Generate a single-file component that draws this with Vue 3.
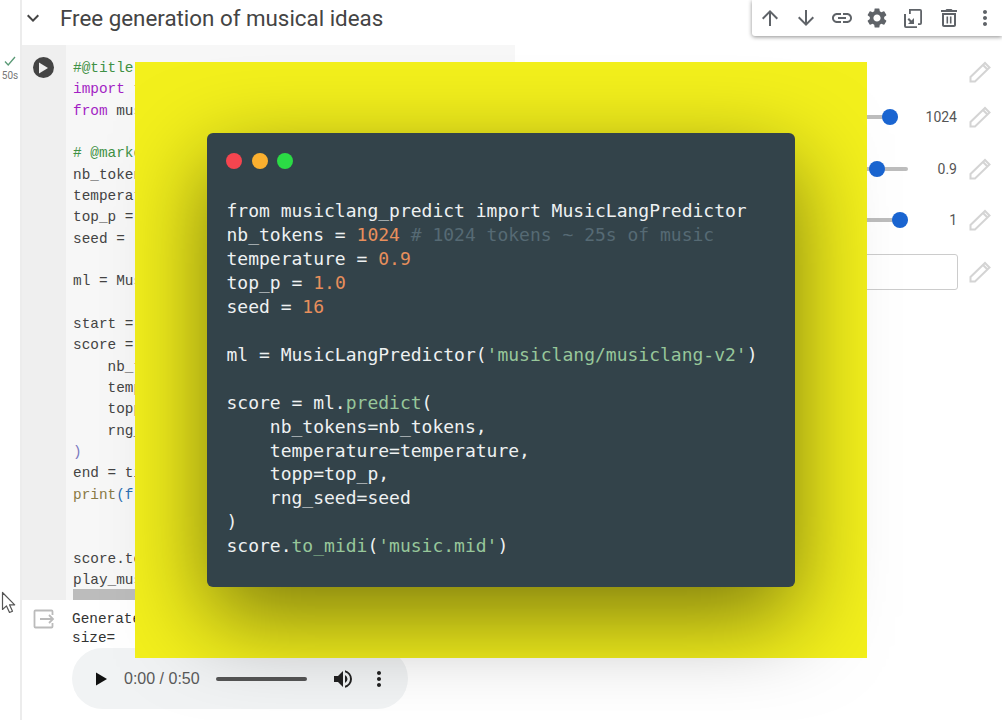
<script setup>
const sliders = [
  { value: '1024', pct: 100 },
  { value: '0.9', pct: 83 },
  { value: '1', pct: 100 }
]
const thumbLeft = (pct) => ({ left: (pct * 134) / 100 + 'px' })
</script>

<template>
  <div class="page">
    <svg class="cursor" width="16" height="24" viewBox="0 0 16 24">
      <path d="M1.5 1.5v17l4-3.6 3 6.6 3-1.3-3-6.4h5.2z" fill="#fff" stroke="#555" stroke-width="1.2" stroke-linejoin="round" />
    </svg>

    <div class="gutter"></div>

    <main class="notebook">
      <header class="head">
        <svg class="chevron" width="24" height="24" viewBox="0 0 24 24"><path d="M16.59 8.59 12 13.17 7.41 8.59 6 10l6 6 6-6z" fill="#444" /></svg>
        <h1 class="title">Free generation of musical ideas</h1>
        <div class="toolbar">
          <svg class="tool" viewBox="0 0 24 24"><path d="M4 12l1.41 1.41L11 7.83V20h2V7.83l5.58 5.59L20 12l-8-8-8 8z" /></svg>
          <svg class="tool" viewBox="0 0 24 24"><path d="M20 12l-1.41-1.41L13 16.17V4h-2v12.17l-5.58-5.59L4 12l8 8 8-8z" /></svg>
          <svg class="tool" viewBox="0 0 24 24"><path d="M3.9 12c0-1.71 1.39-3.1 3.1-3.1h4V7H7c-2.76 0-5 2.24-5 5s2.24 5 5 5h4v-1.9H7c-1.71 0-3.1-1.39-3.1-3.1zM8 13h8v-2H8v2zm9-6h-4v1.9h4c1.71 0 3.1 1.39 3.1 3.1s-1.39 3.1-3.1 3.1h-4V17h4c2.76 0 5-2.24 5-5s-2.24-5-5-5z" /></svg>
          <svg class="tool" viewBox="0 0 24 24"><path d="M19.14 12.94c.04-.3.06-.61.06-.94 0-.32-.02-.64-.07-.94l2.03-1.58a.49.49 0 0 0 .12-.61l-1.92-3.32a.488.488 0 0 0-.59-.22l-2.39.96c-.5-.38-1.03-.7-1.62-.94l-.36-2.54a.484.484 0 0 0-.48-.41h-3.84c-.24 0-.43.17-.47.41l-.36 2.54c-.59.24-1.13.57-1.62.94l-2.39-.96c-.22-.08-.47 0-.59.22L2.74 8.87c-.12.21-.08.47.12.61l2.03 1.58c-.05.3-.09.63-.09.94s.02.64.07.94l-2.03 1.58a.49.49 0 0 0-.12.61l1.92 3.32c.12.22.37.29.59.22l2.39-.96c.5.38 1.03.7 1.62.94l.36 2.54c.05.24.24.41.48.41h3.84c.24 0 .44-.17.47-.41l.36-2.54c.59-.24 1.13-.56 1.62-.94l2.39.96c.22.08.47 0 .59-.22l1.92-3.32c.12-.22.07-.47-.12-.61l-2.01-1.58zM12 15.6c-1.98 0-3.6-1.62-3.6-3.6s1.62-3.6 3.6-3.6 3.6 1.62 3.6 3.6-1.62 3.6-3.6 3.6z" /></svg>
          <svg class="tool" viewBox="0 0 24 24"><path d="M8 3h11a2 2 0 0 1 2 2v12a2 2 0 0 1-2 2h-2v-1.8h2.2V4.8H9.8V8H8zM3 8h2v12.2h11V22H5a2 2 0 0 1-2-2zM13 18H7l2-2-2.5-2.5L8 12l2.5 2.5L13 12z" /></svg>
          <svg class="tool" viewBox="0 0 24 24"><path d="M5 19c0 1.1.9 2 2 2h10c1.1 0 2-.9 2-2V7H5v12zM7 9h10v10H7V9zM15.5 4l-1-1h-5l-1 1H4v2h16V4zM9.5 10.5h1.6v7H9.5zm3.4 0h1.6v7h-1.6z" /></svg>
          <svg class="tool" viewBox="0 0 24 24"><path d="M12 8c1.1 0 2-.9 2-2s-.9-2-2-2-2 .9-2 2 .9 2 2 2zm0 2c-1.1 0-2 .9-2 2s.9 2 2 2 2-.9 2-2-.9-2-2-2zm0 6c-1.1 0-2 .9-2 2s.9 2 2 2 2-.9 2-2-.9-2-2-2z" /></svg>
        </div>
      </header>

      <section class="cell">
        <div class="status">
          <svg width="14" height="12" viewBox="0 0 14 12"><path d="M2 6.5 5.2 10 12 2" fill="none" stroke="#5a9a76" stroke-width="1.3" /></svg>
          <span class="time">50s</span>
        </div>
        <div class="run">
          <span class="play-btn"><svg width="12" height="12" viewBox="0 0 12 12"><path d="M2 0.5v11L11 6z" fill="#eee" /></svg></span>
        </div>
        <div class="code">
          <pre class="src"><span class="cm">#@title</span>
<span class="kw">import</span> time
<span class="kw">from</span> musiclang_predict
 
<span class="cm"># @markdown</span>
nb_tokens
temperature
top_p =
seed =
 
ml = MusicLang
 
start =
score =
    nb_tokens
    temperature
    topp
    rng_seed
<span class="br">)</span>
end = time
<span class="fn">print</span><span class="str">(f</span>
 
 
score.to_midi
play_music</pre>
          <div class="scrollbar"></div>
        </div>
        <div class="form">
          <div class="form-row first">
            <svg class="pencil" viewBox="0 0 24 24"><path d="M2.5 21.5V17L17 3l4.5 4.5L7 21.5zM15 5l4 4" /></svg>
          </div>
          <div v-for="(s, i) in sliders" :key="s.value" class="form-row" :class="'slide-' + i">
            <div class="track"><span class="thumb" :style="thumbLeft(s.pct)"></span></div>
            <span class="val">{{ s.value }}</span>
            <svg class="pencil" viewBox="0 0 24 24"><path d="M2.5 21.5V17L17 3l4.5 4.5L7 21.5zM15 5l4 4" /></svg>
          </div>
          <div class="form-row input-row">
            <div class="input"></div>
            <svg class="pencil" viewBox="0 0 24 24"><path d="M2.5 21.5V17L17 3l4.5 4.5L7 21.5zM15 5l4 4" /></svg>
          </div>
        </div>
      </section>

      <section class="output">
        <svg class="out-icon" width="24" height="24" viewBox="0 0 24 24"><path d="M20.5 8V4.5a1 1 0 0 0-1-1H3.5a1 1 0 0 0-1 1v15a1 1 0 0 0 1 1h16a1 1 0 0 0 1-1V16M8 12h13M17 8l4 4-4 4" fill="none" stroke="#bbb" stroke-width="1.8" /></svg>
        <div class="out-body">
          <pre class="log">Generated
size=</pre>
          <div class="audio">
            <svg class="a-play" width="14" height="14" viewBox="0 0 14 14"><path d="M2 .5v13L13 7z" fill="#111" /></svg>
            <span class="a-time">0:00 / 0:50</span>
            <span class="a-track"></span>
            <svg class="a-vol" width="24" height="24" viewBox="0 0 24 24"><path d="M3 9v6h4l5 5V4L7 9zM16.5 12A4.5 4.5 0 0 0 14 7.97v8.05A4.5 4.5 0 0 0 16.5 12zM14 3.23v2.06a7 7 0 0 1 0 13.42v2.06a9 9 0 0 0 0-17.54z" fill="#222" /></svg>
            <svg class="a-more" width="24" height="24" viewBox="0 0 24 24"><path d="M12 8c1.1 0 2-.9 2-2s-.9-2-2-2-2 .9-2 2 .9 2 2 2zm0 2c-1.1 0-2 .9-2 2s.9 2 2 2 2-.9 2-2-.9-2-2-2zm0 6c-1.1 0-2 .9-2 2s.9 2 2 2 2-.9 2-2-.9-2-2-2z" fill="#222" /></svg>
          </div>
        </div>
      </section>
    </main>

    <aside class="poster">
      <div class="window">
        <div class="dots"><i class="red"></i><i class="amber"></i><i class="green"></i></div>
        <pre class="snippet">from musiclang_predict import MusicLangPredictor
nb_tokens = <b>1024</b> <em># 1024 tokens ~ 25s of music</em>
temperature = <b>0.9</b>
top_p = <b>1.0</b>
seed = <b>16</b>

ml = MusicLangPredictor(<u>'musiclang/musiclang-v2'</u>)

score = ml.<u>predict</u>(
    nb_tokens=nb_tokens,
    temperature=temperature,
    topp=top_p,
    rng_seed=seed
)
score.<u>to_midi</u>(<u>'music.mid'</u>)</pre>
      </div>
    </aside>
  </div>
</template>

<style>
html, body { margin: 0; background: #fff; overflow: hidden; }
</style>

<style scoped>
.page { position: relative; width: 1002px; height: 720px; display: flex; overflow: hidden; background: #fff; font-family: Roboto, "Liberation Sans", sans-serif; }
.cursor { position: absolute; left: 1px; top: 591px; z-index: 3; }
.gutter { width: 20px; flex: none; }
.notebook { flex: 1; min-width: 0; border-left: 2px solid #ececec; display: flex; flex-direction: column; }
.head { height: 45px; flex: none; display: flex; align-items: flex-start; position: relative; }
.chevron { margin: 6px 0 0 -1px; }
.title { margin: 0 0 0 15px; font-size: 22.35px; font-weight: 400; line-height: 36px; color: #444; white-space: nowrap; }
.toolbar { position: absolute; top: 0; right: 0; width: 250px; height: 36px; box-sizing: border-box; padding-left: 6px; display: flex; align-items: center; background: #fff; border-radius: 0 0 0 3px; box-shadow: 0 1px 4px rgba(0,0,0,.45); }
.tool { width: 24px; height: 24px; margin-right: 11.8px; fill: #5f6368; flex: none; }
.cell { height: 555px; flex: none; display: flex; position: relative; }
.status { position: absolute; left: -22px; top: 10px; width: 20px; display: flex; flex-direction: column; align-items: center; }
.time { font-size: 10px; line-height: 12px; color: #777; margin-top: 3px; }
.run { width: 44px; flex: none; background: #efefef; display: flex; justify-content: center; padding: 12px 2px 0 0; box-sizing: border-box; }
.play-btn { width: 21px; height: 21px; border-radius: 50%; background: #444; display: flex; align-items: center; justify-content: center; }
.code { width: 449px; flex: none; background: #f7f7f7; position: relative; box-sizing: border-box; padding: 13px 0 0 7px; overflow: hidden; }
.src { margin: 0; font: 14.4px/21.33px "Liberation Mono", monospace; color: #444; }
.cm { color: #3f9145; }
.kw { color: #a31fc4; }
.br { color: #7a7ac0; }
.fn { color: #8a7a45; }
.str { color: #2a6fb5; }
.scrollbar { position: absolute; left: 7px; right: 0; bottom: 0; height: 11px; background: #bcbcbc; }
.form { flex: 1; min-width: 0; display: flex; flex-direction: column; padding: 9px 10px 0 0; align-items: stretch; }
.form-row { height: 36px; display: flex; align-items: center; justify-content: flex-end; flex: none; }
.slide-0 { margin-top: 9px; }
.slide-1 { margin-top: 16px; }
.slide-2 { margin-top: 15px; }
.input-row { margin-top: 16px; }
.pencil { width: 24px; height: 24px; margin-left: 11px; fill: none; stroke: #d4d4d4; stroke-width: 2; flex: none; }
.track { width: 150px; height: 4px; background: #bdbdbd; position: relative; border-radius: 2px; }
.thumb { position: absolute; top: -6px; width: 16px; height: 16px; border-radius: 50%; background: #1a65d1; }
.val { min-width: 21px; margin-left: 28px; text-align: right; font-size: 14px; color: #555; }
.input { width: 120px; height: 34px; margin-right: -1px; border: 1px solid #ccc; border-radius: 3px; }
.output { flex: 1; display: flex; min-height: 0; }
.out-icon { margin: 7px 0 0 10px; flex: none; }
.out-body { margin-left: 16px; padding-top: 10px; }
.log { margin: 0; font: 14.4px/19px "Liberation Mono", monospace; color: #333; height: 38px; }
.audio { width: 336px; height: 61px; border-radius: 31px; background: #f1f3f4; display: flex; align-items: center; }
.a-play { margin-left: 22px; flex: none; }
.a-time { margin-left: 16px; font: 16px "Liberation Sans", Arial, sans-serif; color: #5a5a5a; white-space: nowrap; width: 75px; }
.a-track { margin-left: 17px; width: 91px; height: 4px; border-radius: 2px; background: #555; flex: none; }
.a-vol { margin-left: 24px; flex: none; }
.a-more { margin-left: 12px; flex: none; }
.poster { position: absolute; left: 135px; top: 62px; width: 732px; height: 596px; box-sizing: border-box; padding: 71px 72px; background: #f3f01c; z-index: 2; }
.window { height: 454px; box-sizing: border-box; padding: 20px 20px 20px 19.5px; background: #33434a; border-radius: 6px; box-shadow: 0 30px 90px rgba(0,0,0,.5); }
.dots { display: flex; gap: 9.7px; height: 16px; margin-left: -.5px; }
.dots i { width: 16px; height: 16px; border-radius: 50%; display: block; }
.red { background: #f5454f; }
.amber { background: #fbb02f; }
.green { background: #2bdb45; }
.snippet { margin: 30px 0 0; font: 18px/23.95px "DejaVu Sans Mono", monospace; color: #eef1f2; }
.snippet b { font-weight: 400; color: #e88f5c; }
.snippet em { font-style: normal; color: #566a74; }
.snippet u { text-decoration: none; color: #97c79a; }
</style>
